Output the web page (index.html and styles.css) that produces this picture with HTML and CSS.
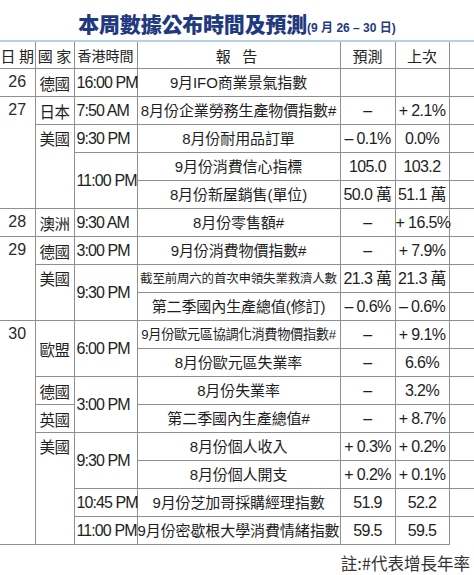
FILE: index.html
```html
<!DOCTYPE html>
<html lang="zh-Hant">
<head>
<meta charset="utf-8">
<link rel="stylesheet" href="styles.css">
</head>
<body>
<div class="page">
  <h1 class="title">本周數據公布時間及預測<span class="sub">(9 月 26 – 30 日)</span></h1>
  <table class="tbl">
    <colgroup>
      <col class="c-date"><col class="c-cty"><col class="c-time"><col class="c-rep"><col class="c-fc"><col class="c-prev"><col class="c-x">
    </colgroup>
    <thead>
      <tr>
        <th class="h-date">日 期</th><th class="h-cty">國 家</th><th class="h-time">香港時間</th><th class="h-rep">報 告</th><th>預測</th><th>上次</th><th></th>
      </tr>
    </thead>
    <tbody>
      <tr>
        <td class="date">26</td><td class="cty">德國</td><td class="time">16:00 PM</td><td class="rep">9月IFO商業景氣指數</td><td class="num"></td><td class="num"></td><td></td>
      </tr>
      <tr>
        <td class="date" rowspan="4">27</td><td class="cty">日本</td><td class="time">7:50 AM</td><td class="rep">8月份企業勞務生產物價指數#</td><td class="num">–</td><td class="num">+ 2.1%</td><td></td>
      </tr>
      <tr>
        <td class="cty top" rowspan="3">美國</td><td class="time">9:30 PM</td><td class="rep">8月份耐用品訂單</td><td class="num">– 0.1%</td><td class="num">0.0%</td><td></td>
      </tr>
      <tr>
        <td class="time" rowspan="2">11:00 PM</td><td class="rep">9月份消費信心指標</td><td class="num">105.0</td><td class="num">103.2</td><td></td>
      </tr>
      <tr>
        <td class="rep">8月份新屋銷售(單位)</td><td class="num">50.0 萬</td><td class="num">51.1 萬</td><td></td>
      </tr>
      <tr>
        <td class="date">28</td><td class="cty">澳洲</td><td class="time">9:30 AM</td><td class="rep">8月份零售額#</td><td class="num">–</td><td class="num">+ 16.5%</td><td></td>
      </tr>
      <tr>
        <td class="date" rowspan="3">29</td><td class="cty">德國</td><td class="time">3:00 PM</td><td class="rep">9月份消費物價指數#</td><td class="num">–</td><td class="num">+ 7.9%</td><td></td>
      </tr>
      <tr>
        <td class="cty top" rowspan="2">美國</td><td class="time" rowspan="2">9:30 PM</td><td class="rep small">截至前周六的首次申領失業救濟人數</td><td class="num">21.3 萬</td><td class="num">21.3 萬</td><td></td>
      </tr>
      <tr>
        <td class="rep">第二季國內生產總值(修訂)</td><td class="num">– 0.6%</td><td class="num">– 0.6%</td><td></td>
      </tr>
      <tr>
        <td class="date" rowspan="8">30</td><td class="cty" rowspan="2">歐盟</td><td class="time" rowspan="2">6:00 PM</td><td class="rep mid">9月份歐元區協調化消費物價指數#</td><td class="num">–</td><td class="num">+ 9.1%</td><td></td>
      </tr>
      <tr>
        <td class="rep">8月份歐元區失業率</td><td class="num">–</td><td class="num">6.6%</td><td></td>
      </tr>
      <tr>
        <td class="cty">德國</td><td class="time" rowspan="2">3:00 PM</td><td class="rep">8月份失業率</td><td class="num">–</td><td class="num">3.2%</td><td></td>
      </tr>
      <tr>
        <td class="cty">英國</td><td class="rep">第二季國內生產總值#</td><td class="num">–</td><td class="num">+ 8.7%</td><td></td>
      </tr>
      <tr>
        <td class="cty top" rowspan="4">美國</td><td class="time" rowspan="2">9:30 PM</td><td class="rep">8月份個人收入</td><td class="num">+ 0.3%</td><td class="num">+ 0.2%</td><td></td>
      </tr>
      <tr>
        <td class="rep">8月份個人開支</td><td class="num">+ 0.2%</td><td class="num">+ 0.1%</td><td></td>
      </tr>
      <tr>
        <td class="time">10:45 PM</td><td class="rep">9月份芝加哥採購經理指數</td><td class="num">51.9</td><td class="num">52.2</td><td></td>
      </tr>
      <tr class="last">
        <td class="time">11:00 PM</td><td class="rep">9月份密歇根大學消費情緒指數</td><td class="num">59.5</td><td class="num">59.5</td><td class="noline"></td>
      </tr>
    </tbody>
  </table>
  <p class="note">註:#代表增長年率</p>
</div>
</body>
</html>
```

FILE: styles.css
```css
html, body {
  margin: 0;
  padding: 0;
  background: #ffffff;
  overflow: hidden;
}

.page {
  width: 474px;
  font-family: "Liberation Sans", "Noto Sans CJK TC", sans-serif;
  color: #1e1e1e;
}

.title {
  margin: 0;
  height: 40px;
  padding-top: 10px;
  box-sizing: border-box;
  text-align: center;
  font-family: "Noto Sans CJK TC", sans-serif;
  font-size: 21px;
  line-height: 26px;
  font-weight: 900;
  color: #1f3a7e;
  letter-spacing: -0.2px;
}

.title .sub {
  font-family: "Liberation Sans", "Noto Sans CJK TC", sans-serif;
  font-size: 12px;
  font-weight: 700;
  letter-spacing: 0;
}

.tbl {
  border-collapse: collapse;
  table-layout: fixed;
  width: 474px;
  border-top: 2px solid #b5d2e3;
}

.c-date { width: 35px; }
.c-cty { width: 39px; }
.c-time { width: 63px; }
.c-rep { width: 203px; }
.c-fc { width: 55px; }
.c-prev { width: 54px; }
.c-x { width: 25px; }

.tbl th,
.tbl td {
  border: 1px solid #8f8f8f;
  padding: 0;
  white-space: nowrap;
  overflow: visible;
}

.tbl th:first-child,
.tbl td.date {
  border-left: none;
}

.tbl th:last-child,
.tbl td:last-child {
  border-right: none;
}

.tbl thead th {
  border-top: none;
  height: 26px;
  font-family: "Noto Sans CJK TC", sans-serif;
  font-weight: 400;
  font-size: 15px;
  color: #222;
  vertical-align: middle;
}

.h-date, .h-cty {
  letter-spacing: 0;
}

.h-time {
  letter-spacing: 0;
  font-size: 14px !important;
}

.h-rep {
  letter-spacing: 4px;
}

.tbl tbody tr {
  height: 28px;
}

.tbl td {
  vertical-align: middle;
  text-align: center;
  font-size: 16px;
  line-height: 20px;
  font-weight: 400;
}

.tbl td.date {
  vertical-align: top;
  padding-top: 3px;
  font-size: 16px;
  color: #2a2a2a;
}

.tbl td.cty {
  font-family: "Noto Sans CJK TC", sans-serif;
  font-size: 15.5px;
  letter-spacing: -0.6px;
}

.tbl td.cty.top {
  vertical-align: top;
  padding-top: 3px;
}

.tbl td.time {
  font-size: 16px;
  letter-spacing: -0.9px;
  text-align: left;
  padding-left: 2px;
}

.tbl td.rep {
  font-size: 15px;
  letter-spacing: -0.1px;
}

.tbl td.rep.small {
  font-size: 12.5px;
  letter-spacing: -0.2px;
}

.tbl td.rep.mid {
  font-size: 13.2px;
  letter-spacing: -0.3px;
}

.tbl td.num {
  font-size: 16px;
  letter-spacing: -0.6px;
}

.tbl tr.last td.noline {
  border-bottom: none;
}

.note {
  margin: 8px 4px 0 0;
  text-align: right;
  font-family: "Noto Sans CJK TC", sans-serif;
  font-size: 16.5px;
  line-height: 20px;
  color: #333;
}
```
